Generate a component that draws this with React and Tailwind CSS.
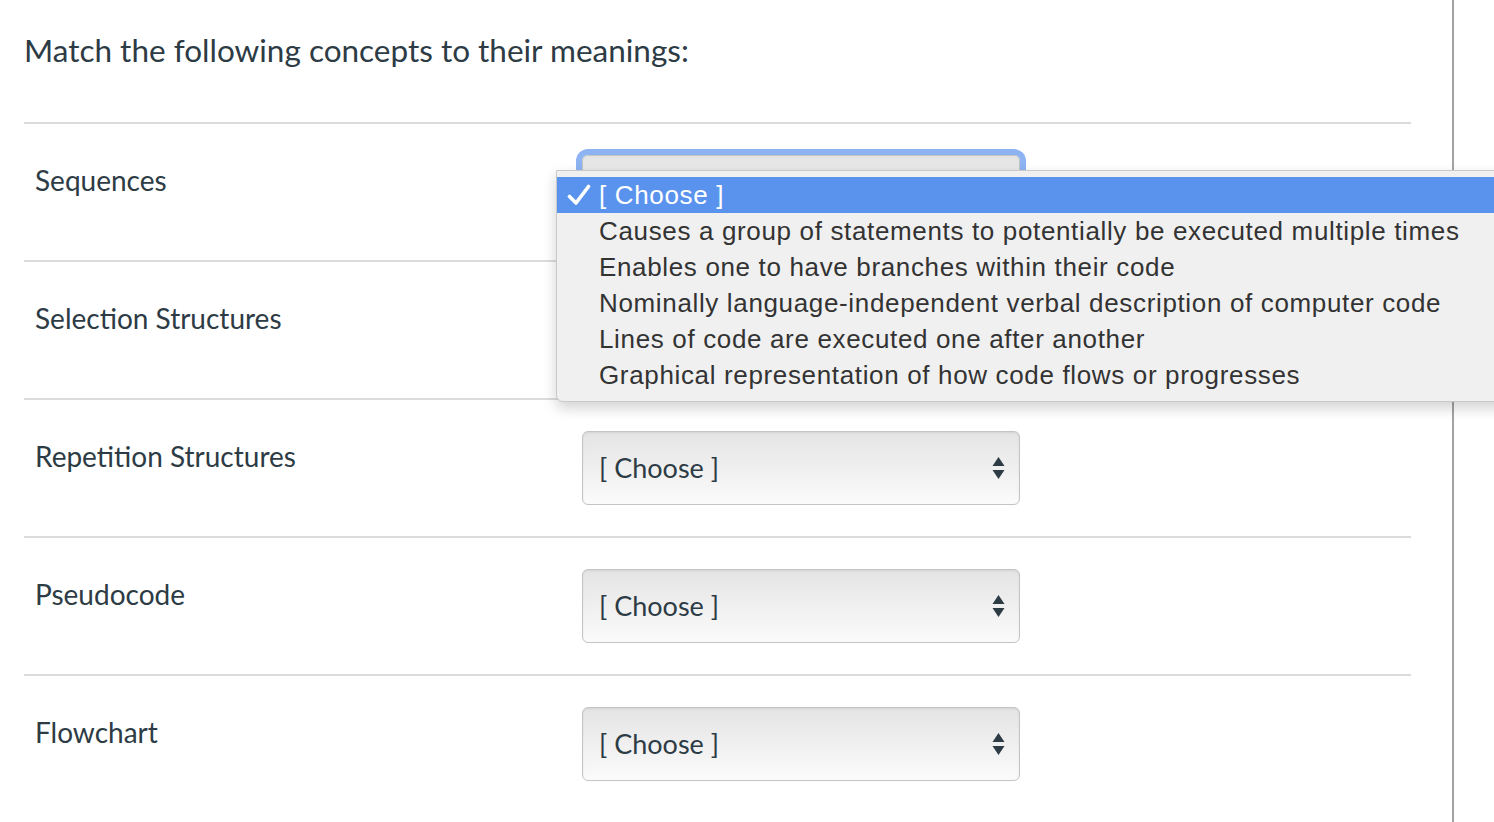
import React from 'react';

const concepts = ['Sequences', 'Selection Structures', 'Repetition Structures', 'Pseudocode', 'Flowchart'];
const options = [
  'Causes a group of statements to potentially be executed multiple times',
  'Enables one to have branches within their code',
  'Nominally language-independent verbal description of computer code',
  'Lines of code are executed one after another',
  'Graphical representation of how code flows or progresses',
];

function Arrows() {
  return (
    <svg width="13" height="26" viewBox="0 0 13 26" className="text-[#2d3b45]">
      <path d="M6.5 2 L12.5 11 L0.5 11 Z" fill="currentColor" />
      <path d="M6.5 24 L12.5 15 L0.5 15 Z" fill="currentColor" />
    </svg>
  );
}

function FakeSelect({ focused }) {
  return (
    <div
      className={`flex h-[74px] w-[438px] items-center justify-between rounded-[6px] border border-[#c4c4c4] bg-gradient-to-b from-[#e4e4e4] to-[#fbfbfb] pl-[16px] pr-[14px] ${focused ? 'shadow-[0_0_0_6px_#8db3f2]' : 'shadow-[inset_0_1px_2px_rgba(0,0,0,0.08)]'}`}
    >
      <span className="text-[27px] text-[#2d3b45]">[ Choose ]</span>
      <Arrows />
    </div>
  );
}

export default function App() {
  return (
    <div className="relative h-[822px] w-[1494px] overflow-hidden bg-white" style={{ fontFamily: 'Lato, "Noto Sans", sans-serif' }}>
      <div className="flex h-full">
        <div className="ml-[24px] w-[1387px]">
          <h1 className="pt-[29px] pb-[51px] text-[31.5px] leading-[42px] text-[#2d3b45]">Match the following concepts to their meanings:</h1>
          {concepts.map((c, i) => (
            <div key={c} className="flex h-[138px] border-t-2 border-[#dcdcdc]">
              <div className="w-[558px] pl-[11px] pt-[38px] text-[28px] leading-[36px] text-[#2d3b45]">{c}</div>
              <div className="pt-[31px]">
                <FakeSelect focused={i === 0} />
              </div>
            </div>
          ))}
        </div>
        <div className="ml-[41px] w-[2px] bg-[#a3a3a3]" />
      </div>

      <div
        className="absolute left-[556px] top-[170px] w-[960px] rounded-bl-[7px] border border-[#c9c9c9] bg-[#f0f0f0] pt-[6px] pb-[8px] shadow-[0_6px_14px_rgba(0,0,0,0.18)]"
        style={{ fontFamily: '"Liberation Sans", Arial, sans-serif' }}
      >
        <div className="flex h-[36px] items-center bg-[#5a93ee] text-white">
          <span className="flex w-[42px] justify-center pl-[2px]">
            <svg width="24" height="22" viewBox="0 0 24 22">
              <path d="M2.5 12.5 L9 19 L21.5 2.5" fill="none" stroke="white" strokeWidth="3.6" strokeLinecap="round" strokeLinejoin="round" />
            </svg>
          </span>
          <span className="text-[26px] tracking-[0.65px]">[ Choose ]</span>
        </div>
        {options.map(o => (
          <div key={o} className="flex h-[36px] items-center pl-[42px] text-[26px] tracking-[0.65px] text-[#333333]">{o}</div>
        ))}
      </div>
    </div>
  );
}
